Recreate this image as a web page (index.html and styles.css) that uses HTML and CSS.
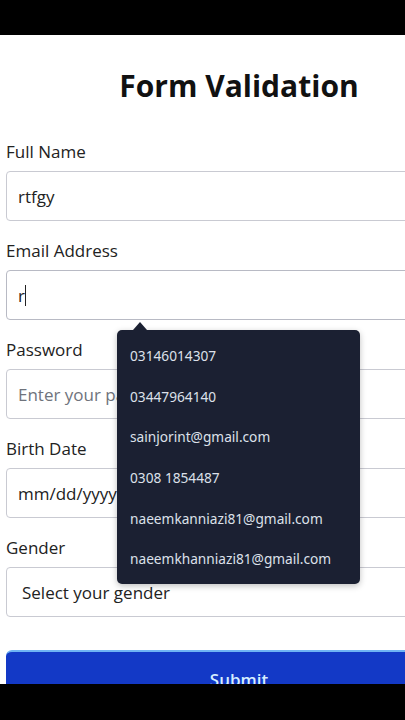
FILE: index.html
```html
<!DOCTYPE html>
<html lang="en">
<head>
<meta charset="utf-8">
<title>Form Validation</title>
<link rel="stylesheet" href="styles.css">
</head>
<body>
<div class="screen">
  <div class="bar bar-top"></div>
  <main class="page">
    <form class="form">
      <h1 class="title">Form Validation</h1>
      <div class="group">
        <label class="label">Full Name</label>
        <div class="field"><span class="value">rtfgy</span></div>
      </div>
      <div class="group">
        <label class="label">Email Address</label>
        <div class="field field-focus"><span class="value">r</span><span class="caret"></span></div>
      </div>
      <div class="group">
        <label class="label">Password</label>
        <div class="field"><span class="placeholder">Enter your password</span></div>
      </div>
      <div class="group">
        <label class="label">Birth Date</label>
        <div class="field"><span class="value">mm/dd/yyyy</span></div>
      </div>
      <div class="group">
        <label class="label">Gender</label>
        <div class="field field-select"><span class="value">Select your gender</span></div>
      </div>
      <button type="button" class="submit">Submit</button>
    </form>
    <div class="suggest">
      <div class="suggest-item">03146014307</div>
      <div class="suggest-item">03447964140</div>
      <div class="suggest-item">sainjorint@gmail.com</div>
      <div class="suggest-item">0308 1854487</div>
      <div class="suggest-item">naeemkanniazi81@gmail.com</div>
      <div class="suggest-item">naeemkhanniazi81@gmail.com</div>
    </div>
  </main>
  <div class="bar bar-bottom"></div>
</div>
</body>
</html>
```

FILE: styles.css
```css
html, body {
  margin: 0;
  padding: 0;
  background: #000;
}
body {
  width: 405px;
  height: 720px;
  overflow: hidden;
  font-family: "Open Sans", "Noto Sans", sans-serif;
}
.screen {
  display: flex;
  flex-direction: column;
  width: 405px;
  height: 720px;
}
.bar {
  background: #000;
  flex: none;
}
.bar-top {
  height: 35px;
}
.bar-bottom {
  height: 36px;
}
.page {
  position: relative;
  height: 649px;
  flex: none;
  background: #fff;
  overflow: hidden;
}
.form {
  width: 466px;
  margin-left: 6px;
  display: flex;
  flex-direction: column;
}
.title {
  margin: 31px 0 34px;
  text-align: center;
  font-size: 30px;
  font-weight: 700;
  line-height: 40px;
  color: #111;
}
.group {
  display: flex;
  flex-direction: column;
  margin-bottom: 18px;
}
.label {
  font-size: 17px;
  line-height: 23px;
  color: #222;
  margin-bottom: 8px;
}
.field {
  height: 50px;
  box-sizing: border-box;
  border: 1px solid #c9cad2;
  border-radius: 4px;
  padding: 0 11px;
  display: flex;
  align-items: center;
  font-size: 17px;
}
.field-focus {
  border-color: #b8bac4;
}
.field-select {
  padding-left: 15px;
}
.value {
  color: #222;
}
.placeholder {
  color: #6f737c;
}
.caret {
  width: 1px;
  height: 21px;
  background: #222;
}
.submit {
  margin-top: 15px;
  height: 56px;
  border: none;
  border-top: 2px solid #6fb4f4;
  border-radius: 6px 6px 0 0;
  background: #1339c6;
  color: #d6eeff;
  font-family: "Open Sans", sans-serif;
  font-size: 17px;
  font-weight: 600;
  padding: 0;
}
.suggest {
  position: absolute;
  left: 117px;
  top: 295px;
  width: 243px;
  box-sizing: border-box;
  padding: 5px 0 5px;
  background: #1b2032;
  border-radius: 5px;
  box-shadow: 0 2px 6px rgba(0,0,0,0.25);
}
.suggest::before {
  content: "";
  position: absolute;
  left: 16px;
  top: -8px;
  border-left: 7px solid transparent;
  border-right: 7px solid transparent;
  border-bottom: 8px solid #1b2032;
}
.suggest-item {
  height: 40.7px;
  display: flex;
  align-items: center;
  padding-left: 13px;
  font-family: "Noto Sans", sans-serif;
  font-size: 13.7px;
  color: #dde0ea;
}
```
